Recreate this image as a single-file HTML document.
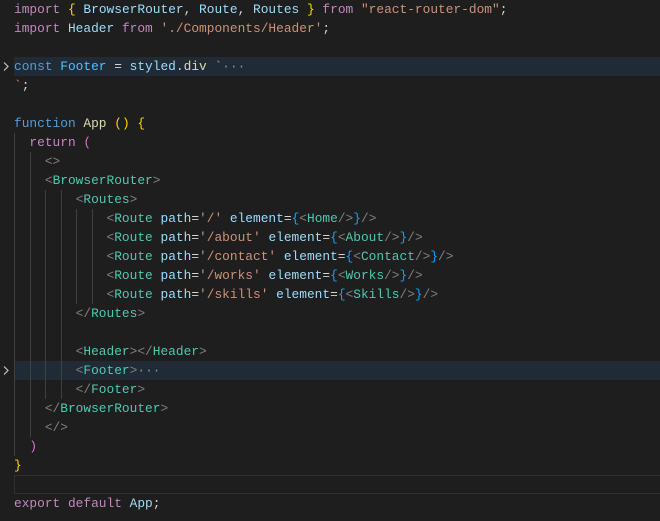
<!DOCTYPE html>
<html><head><style>
body{margin:0;background:#1e1e1e;width:660px;height:521px;overflow:hidden;position:relative;font-family:"Liberation Mono",monospace;font-size:12.85px;}
.l{position:absolute;left:14px;height:19px;line-height:20px;white-space:pre;color:#d4d4d4;}
.hl{position:absolute;left:14px;right:0;height:19px;background:#202b36;}
.g{position:absolute;width:1px;background:#404040;}
.k{color:#c586c0}.b1{color:#ffd700}.b2{color:#da70d6}.b3{color:#179fff}.v{color:#9cdcfe}.s{color:#ce9178}.c{color:#569cd6}.cn{color:#4fc1ff}.f{color:#dcdcaa}.t{color:#4ec9b0}.p{color:#808080}.d{color:#8c8c8c}
.chev{position:absolute;left:1px;width:10px;height:19px;}
</style></head><body>
<div class="hl" style="top:57px"></div>
<div class="hl" style="top:361px"></div>
<div style="position:absolute;left:14px;right:-2px;top:475px;height:17px;border:1px solid #303030;"></div>
<svg class="chev" style="top:57px" viewBox="0 0 10 19"><path d="M3 5.5 L7 9.5 L3 13.5" stroke="#c5c5c5" stroke-width="1.2" fill="none"/></svg>
<svg class="chev" style="top:361px" viewBox="0 0 10 19"><path d="M3 5.5 L7 9.5 L3 13.5" stroke="#c5c5c5" stroke-width="1.2" fill="none"/></svg>
<div class="g" style="left:14px;top:133px;height:323px"></div>
<div class="g" style="left:30px;top:152px;height:285px"></div>
<div class="g" style="left:45px;top:190px;height:209px"></div>
<div class="g" style="left:61px;top:190px;height:209px"></div>
<div class="g" style="left:76px;top:209px;height:95px"></div>
<div class="g" style="left:92px;top:209px;height:95px"></div>

<div class="l" style="top:0px"><span class="k">import</span> <span class="b1">{</span> <span class="v">BrowserRouter</span>, <span class="v">Route</span>, <span class="v">Routes</span> <span class="b1">}</span> <span class="k">from</span> <span class="s">"react-router-dom"</span>;</div>
<div class="l" style="top:19px"><span class="k">import</span> <span class="v">Header</span> <span class="k">from</span> <span class="s">'./Components/Header'</span>;</div>
<div class="l" style="top:57px"><span class="c">const</span> <span class="cn">Footer</span> = <span class="v">styled</span>.<span class="f">div</span> <span class="s">`</span><span class="d">···</span></div>
<div class="l" style="top:76px"><span class="s">`</span>;</div>
<div class="l" style="top:114px"><span class="c">function</span> <span class="f">App</span> <span class="b1">()</span> <span class="b1">{</span></div>
<div class="l" style="top:133px">  <span class="k">return</span> <span class="b2">(</span></div>
<div class="l" style="top:152px">    <span class="p">&lt;&gt;</span></div>
<div class="l" style="top:171px">    <span class="p">&lt;</span><span class="t">BrowserRouter</span><span class="p">&gt;</span></div>
<div class="l" style="top:190px">        <span class="p">&lt;</span><span class="t">Routes</span><span class="p">&gt;</span></div>
<div class="l" style="top:209px">            <span class="p">&lt;</span><span class="t">Route</span> <span class="v">path</span>=<span class="s">'/'</span> <span class="v">element</span>=<span class="b3">{</span><span class="p">&lt;</span><span class="t">Home</span><span class="p">/&gt;</span><span class="b3">}</span><span class="p">/&gt;</span></div>
<div class="l" style="top:228px">            <span class="p">&lt;</span><span class="t">Route</span> <span class="v">path</span>=<span class="s">'/about'</span> <span class="v">element</span>=<span class="b3">{</span><span class="p">&lt;</span><span class="t">About</span><span class="p">/&gt;</span><span class="b3">}</span><span class="p">/&gt;</span></div>
<div class="l" style="top:247px">            <span class="p">&lt;</span><span class="t">Route</span> <span class="v">path</span>=<span class="s">'/contact'</span> <span class="v">element</span>=<span class="b3">{</span><span class="p">&lt;</span><span class="t">Contact</span><span class="p">/&gt;</span><span class="b3">}</span><span class="p">/&gt;</span></div>
<div class="l" style="top:266px">            <span class="p">&lt;</span><span class="t">Route</span> <span class="v">path</span>=<span class="s">'/works'</span> <span class="v">element</span>=<span class="b3">{</span><span class="p">&lt;</span><span class="t">Works</span><span class="p">/&gt;</span><span class="b3">}</span><span class="p">/&gt;</span></div>
<div class="l" style="top:285px">            <span class="p">&lt;</span><span class="t">Route</span> <span class="v">path</span>=<span class="s">'/skills'</span> <span class="v">element</span>=<span class="b3">{</span><span class="p">&lt;</span><span class="t">Skills</span><span class="p">/&gt;</span><span class="b3">}</span><span class="p">/&gt;</span></div>
<div class="l" style="top:304px">        <span class="p">&lt;/</span><span class="t">Routes</span><span class="p">&gt;</span></div>
<div class="l" style="top:342px">        <span class="p">&lt;</span><span class="t">Header</span><span class="p">&gt;&lt;/</span><span class="t">Header</span><span class="p">&gt;</span></div>
<div class="l" style="top:361px">        <span class="p">&lt;</span><span class="t">Footer</span><span class="p">&gt;</span><span class="d">···</span></div>
<div class="l" style="top:380px">        <span class="p">&lt;/</span><span class="t">Footer</span><span class="p">&gt;</span></div>
<div class="l" style="top:399px">    <span class="p">&lt;/</span><span class="t">BrowserRouter</span><span class="p">&gt;</span></div>
<div class="l" style="top:418px">    <span class="p">&lt;/&gt;</span></div>
<div class="l" style="top:437px">  <span class="b2">)</span></div>
<div class="l" style="top:456px"><span class="b1">}</span></div>
<div class="l" style="top:494px"><span class="k">export</span> <span class="k">default</span> <span class="v">App</span>;</div>
</body></html>
